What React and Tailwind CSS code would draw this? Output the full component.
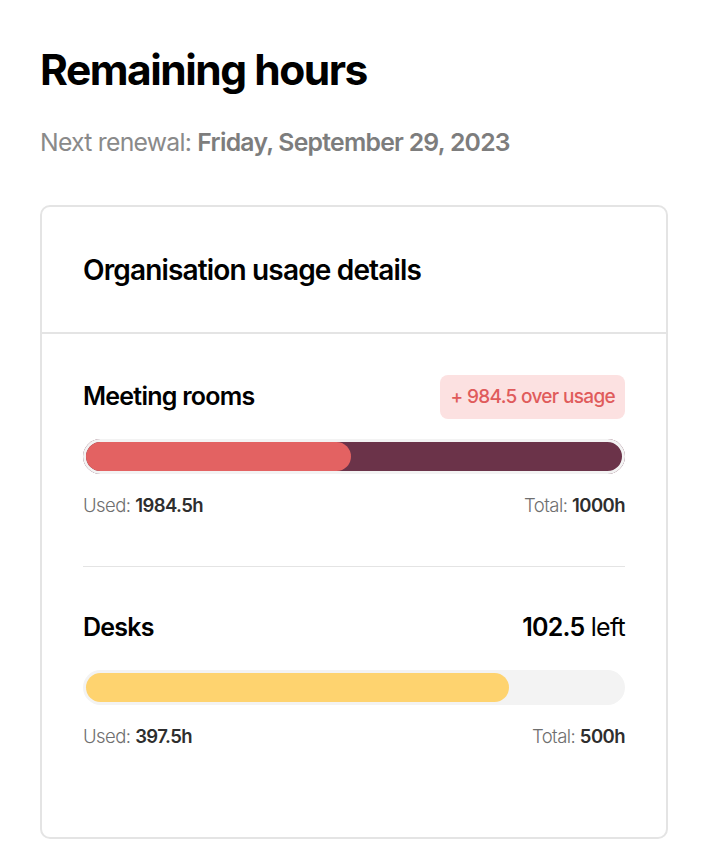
const sections = [
  {
    name: 'Meeting rooms',
    used: '1984.5h',
    total: '1000h',
    over: '+ 984.5 over usage',
    fill: 49.5,
  },
  {
    name: 'Desks',
    used: '397.5h',
    total: '500h',
    left: '102.5',
    fill: 79,
  },
]

function UsageBar({ fill, over }) {
  return (
    <div
      className={`flex h-[35px] w-full rounded-full p-[3px] ${
        over ? 'bg-[#6b3349] ring-[3px] ring-inset ring-[#f3f3f3]' : 'bg-[#f3f3f3]'
      }`}
    >
      <div
        className={`h-full rounded-full ${over ? 'bg-[#e36262]' : 'bg-[#fed36f]'}`}
        style={{ width: `${fill}%` }}
      />
    </div>
  )
}

function UsageSection({ item }) {
  return (
    <div>
      <div className="flex h-[44px] items-center justify-between">
        <h3 className="text-[25px] font-semibold tracking-[-0.03em] text-black">{item.name}</h3>
        {item.over ? (
          <span className="flex h-[44px] items-center rounded-lg bg-[#fce1e1] px-[10px] text-[19px] font-medium tracking-[-0.035em] text-[#e05b5b]">
            {item.over}
          </span>
        ) : (
          <span className="text-[25px] tracking-[-0.03em] text-black">
            <span className="font-semibold">{item.left}</span> left
          </span>
        )}
      </div>
      <div className="mt-[20px]">
        <UsageBar fill={item.fill} over={!!item.over} />
      </div>
      <div className="mt-[18px] flex justify-between text-[18.5px] leading-[26px] tracking-[-0.03em]">
        <p className="font-light text-[#6f6f6f]">
          Used: <span className="font-semibold text-[#2e2e2e]">{item.used}</span>
        </p>
        <p className="font-light text-[#6f6f6f]">
          Total: <span className="font-semibold text-[#2e2e2e]">{item.total}</span>
        </p>
      </div>
    </div>
  )
}

export default function App() {
  return (
    <div className="min-h-[848px] bg-white px-10 pt-[44px] font-['Inter',sans-serif]">
      <h1 className="text-[42.5px] leading-[52px] font-bold tracking-[-0.035em] text-black">Remaining hours</h1>
      <p className="mt-[30px] text-[24.75px] leading-[32px] tracking-[-0.03em] text-[#8a8a8a]">
        Next renewal: <span className="font-semibold text-[#7d7d7d]">Friday, September 29, 2023</span>
      </p>
      <div className="mt-[47px] rounded-[10px] border-2 border-[#e4e4e4]">
        <div className="flex h-[127px] items-center border-b-2 border-[#e4e4e4] px-[41px]">
          <h2 className="text-[28px] font-semibold tracking-[-0.03em] text-black">Organisation usage details</h2>
        </div>
        <div className="px-[41px] pt-[41px] pb-[88px]">
          <UsageSection item={sections[0]} />
          <div className="mt-[48px] mb-[39px] h-px bg-[#e4e4e4]" />
          <UsageSection item={sections[1]} />
        </div>
      </div>
    </div>
  )
}
